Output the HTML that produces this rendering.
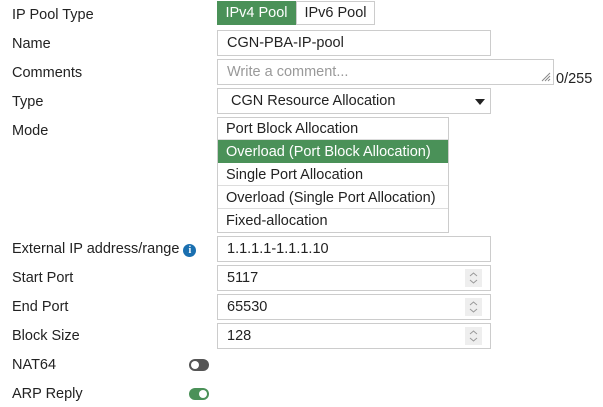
<!DOCTYPE html>
<html><head><style>
body{margin:0;width:603px;height:407px;background:#fff;font-family:"Liberation Sans",sans-serif;font-size:14.5px;color:#222;position:relative;overflow:hidden}
.a{position:absolute;white-space:nowrap}
.lbl{left:12px;line-height:18px}
.box{position:absolute;border:1px solid #ccc;box-sizing:border-box;background:#fff;padding-left:9px;line-height:25px}
.opt{position:absolute;left:218px;width:230px;height:23px;line-height:24px;padding-left:8px;box-sizing:border-box;border-bottom:1px solid #ddd}
.spin{position:absolute;right:8px;top:3px;width:17px;height:18px;background:#eee}
.tog{position:absolute;width:20px;height:12px;border-radius:6px}
.tog i{position:absolute;top:2px;width:8px;height:8px;border-radius:50%;background:#fff}
</style></head><body>
<div class="a lbl" style="top:6px">IP Pool Type</div>
<div class="a lbl" style="top:35px">Name</div>
<div class="a lbl" style="top:64px">Comments</div>
<div class="a lbl" style="top:93px">Type</div>
<div class="a lbl" style="top:122px">Mode</div>
<div class="a lbl" style="top:240px">External IP address/range <span style="display:inline-block;width:13px;height:13px;border-radius:50%;background:#1a6fb0;color:#fff;font-size:10px;font-weight:bold;line-height:13px;text-align:center;font-family:'Liberation Serif',serif;vertical-align:0px">i</span></div>
<div class="a lbl" style="top:269px">Start Port</div>
<div class="a lbl" style="top:298px">End Port</div>
<div class="a lbl" style="top:327px">Block Size</div>
<div class="a lbl" style="top:356px">NAT64</div>
<div class="a lbl" style="top:385px">ARP Reply</div>

<div class="a" style="left:217px;top:1px;width:79px;height:24px;background:#4a9158;color:#fff;line-height:25px;text-align:center">IPv4 Pool</div>
<div class="box" style="left:296px;top:1px;width:79px;height:24px;padding:0;text-align:center;line-height:23px">IPv6 Pool</div>

<div class="box" style="left:217px;top:30px;width:274px;height:26px">CGN-PBA-IP-pool</div>
<div class="box" style="left:217px;top:59px;width:337px;height:26px;color:#999">Write a comment...
<svg style="position:absolute;right:2px;bottom:2px" width="10" height="10"><path d="M9 1L1 9M9 4L4 9M9 7L7 9" stroke="#888" stroke-width="1"/></svg></div>
<div class="a" style="left:556px;top:71px">0/255</div>
<div class="box" style="left:217px;top:88px;width:274px;height:26px;padding-left:13px">CGN Resource Allocation
<svg style="position:absolute;right:5px;top:10px" width="10" height="6"><path d="M0 0H10L5 6Z" fill="#222"/></svg></div>

<div class="a" style="left:217px;top:117px;width:232px;height:116px;border:1px solid #ccc;box-sizing:border-box"></div>
<div class="opt" style="top:117px">Port Block Allocation</div>
<div class="opt" style="top:140px;background:#4a9158;color:#fff;border-color:#4a9158">Overload (Port Block Allocation)</div>
<div class="opt" style="top:163px">Single Port Allocation</div>
<div class="opt" style="top:186px">Overload (Single Port Allocation)</div>
<div class="opt" style="top:209px;border:none">Fixed-allocation</div>

<div class="box" style="left:217px;top:236px;width:274px;height:26px">1.1.1.1-1.1.1.10</div>
<div class="box" style="left:217px;top:265px;width:274px;height:26px">5117<div class="spin"><svg width="17" height="18"><path d="M5 7L8.5 4L12 7M5 11L8.5 14L12 11" stroke="#999" fill="none"/></svg></div></div>
<div class="box" style="left:217px;top:294px;width:274px;height:26px">65530<div class="spin"><svg width="17" height="18"><path d="M5 7L8.5 4L12 7M5 11L8.5 14L12 11" stroke="#999" fill="none"/></svg></div></div>
<div class="box" style="left:217px;top:323px;width:274px;height:26px">128<div class="spin"><svg width="17" height="18"><path d="M5 7L8.5 4L12 7M5 11L8.5 14L12 11" stroke="#999" fill="none"/></svg></div></div>

<div class="tog" style="left:189px;top:359px;background:#555"><i style="left:2px"></i></div>
<div class="tog" style="left:189px;top:388px;background:#4a9158"><i style="left:10px"></i></div>
</body></html>
